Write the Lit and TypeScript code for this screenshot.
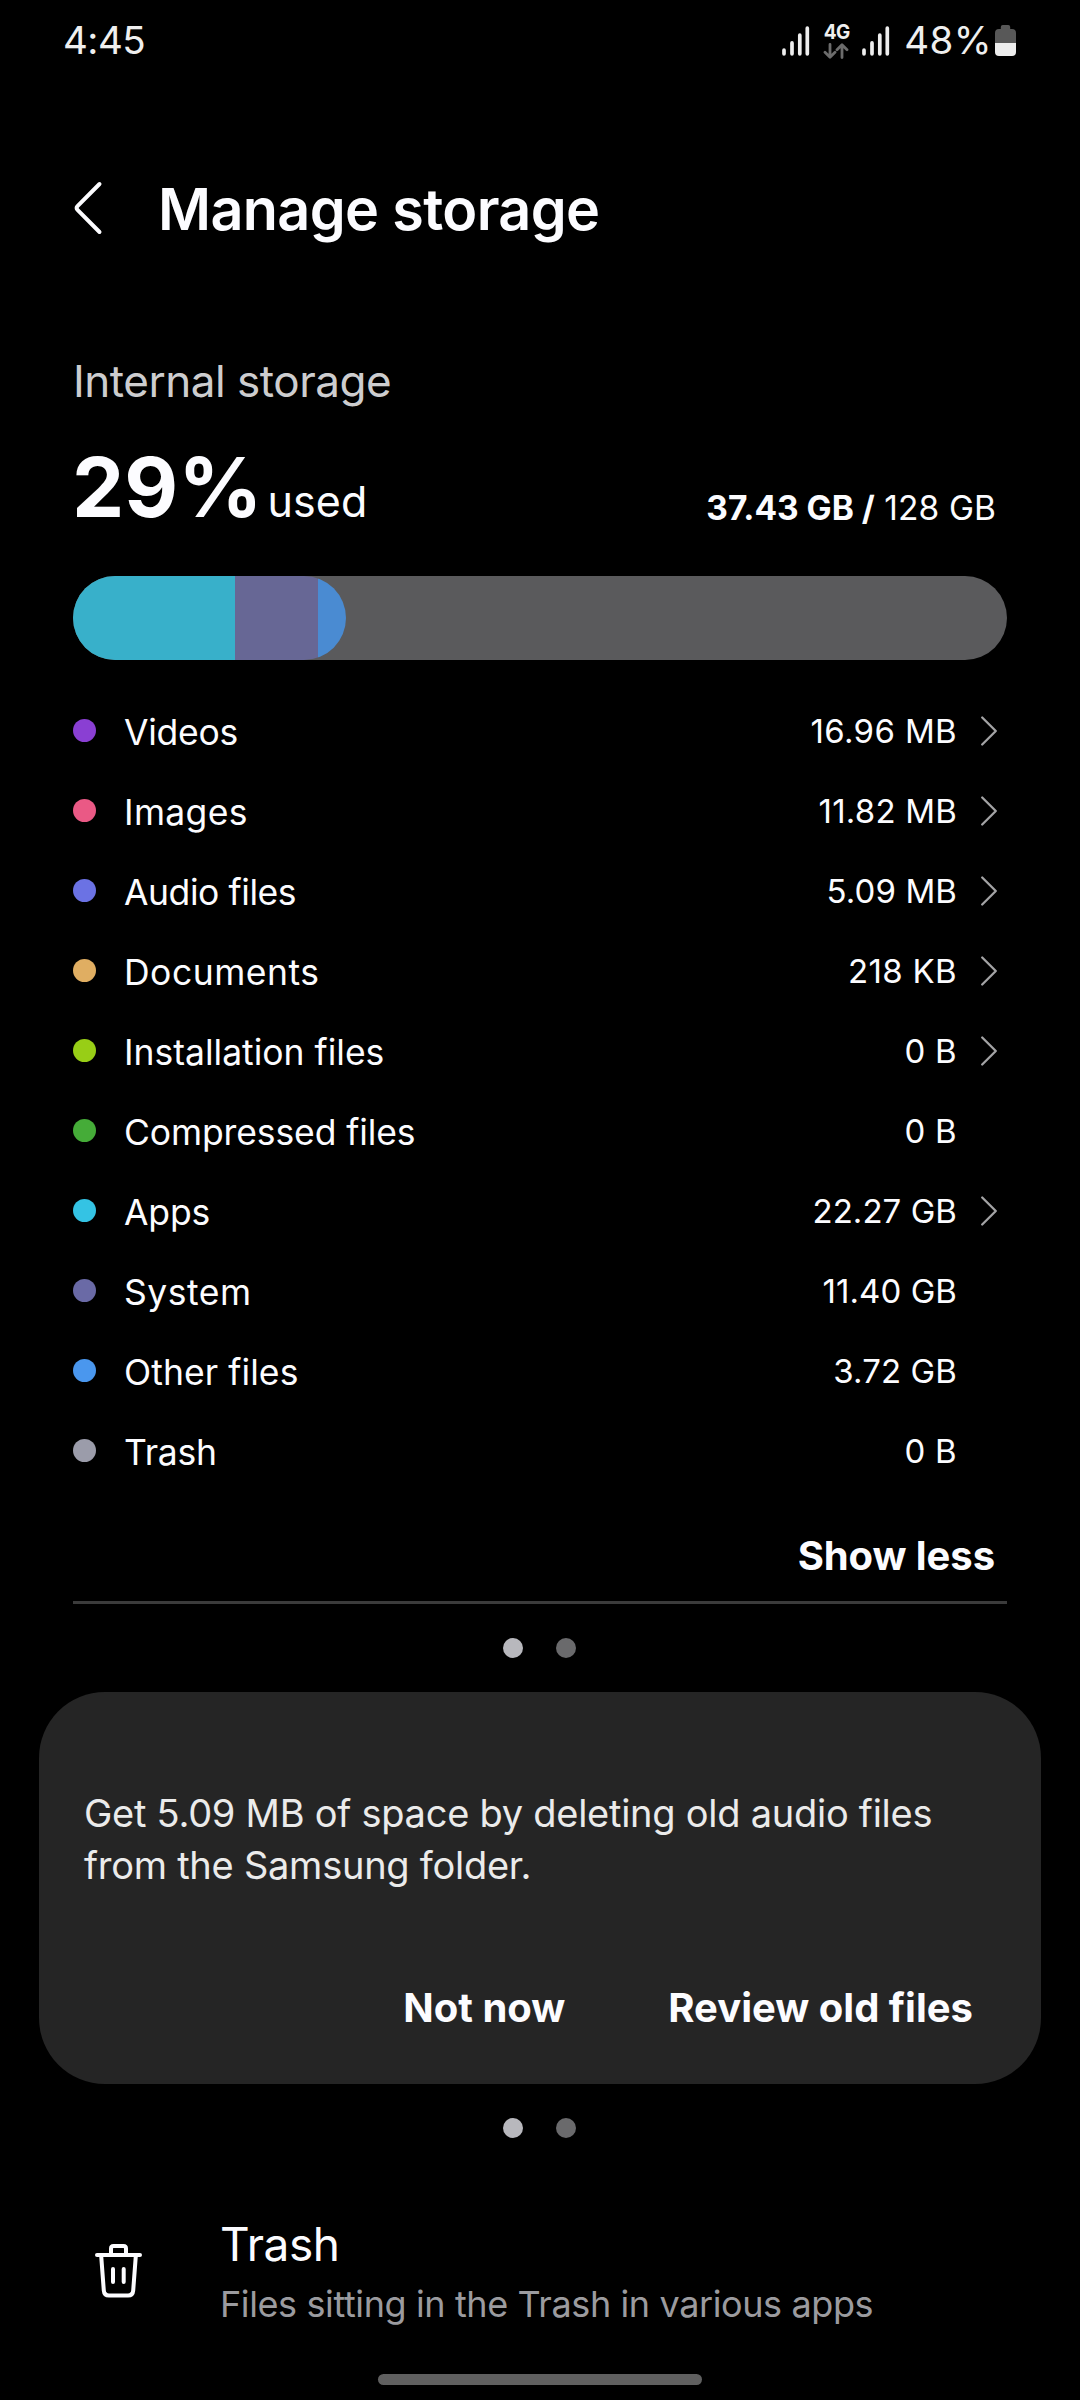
import { LitElement, html, css, svg } from "lit";
import { customElement, property } from "lit/decorators.js";
import { styleMap } from "lit/directives/style-map.js";

interface Category {
  name: string;
  size: string;
  color: string;
  opens: boolean;
  nameTracking: number;
  sizeTracking: number;
}

const CATEGORIES: Category[] = [
  { name: "Videos", size: "16.96 MB", color: "#8a3fd3", opens: true, nameTracking: -0.25, sizeTracking: 0.36 },
  { name: "Images", size: "11.82 MB", color: "#ea5985", opens: true, nameTracking: 0.35, sizeTracking: 0.2 },
  { name: "Audio files", size: "5.09 MB", color: "#6b72e4", opens: true, nameTracking: -0.43, sizeTracking: 0.1 },
  { name: "Documents", size: "218 KB", color: "#e0ae62", opens: true, nameTracking: 0.5, sizeTracking: 0.32 },
  { name: "Installation files", size: "0 B", color: "#98ce16", opens: true, nameTracking: 0, sizeTracking: 0.3 },
  { name: "Compressed files", size: "0 B", color: "#45ac38", opens: false, nameTracking: -0.11, sizeTracking: 0.3 },
  { name: "Apps", size: "22.27 GB", color: "#34c3e4", opens: true, nameTracking: -0.16, sizeTracking: 0.06 },
  { name: "System", size: "11.40 GB", color: "#6a6aa6", opens: false, nameTracking: 0.5, sizeTracking: 0.05 },
  { name: "Other files", size: "3.72 GB", color: "#4a97ee", opens: false, nameTracking: 0.08, sizeTracking: 0.1 },
  { name: "Trash", size: "0 B", color: "#9b9caa", opens: false, nameTracking: -0.25, sizeTracking: 0.3 },
];

const SEGMENTS = [
  { color: "#38b0ca", width: 162 },
  { color: "#676795", width: 83 },
  { color: "#4a8bd2", width: 28 },
];

const signalBars = svg`
  <path d="M2 24.2v3.6M10 16.9v10.9M17.8 9.2v18.6M25.3 2.2v25.6" fill="none"
    stroke="#eeeeee" stroke-width="3.7" stroke-linecap="round" />`;

@customElement("status-bar")
export class StatusBar extends LitElement {
  static styles = css`
    :host {
      display: flex;
      justify-content: space-between;
      height: 80px;
      padding: 0 64px 0 63px;
      color: #efefef;
      font-size: 38.5px;
      line-height: 80px;
    }
    .clock { letter-spacing: -0.5px; }
    .right { display: flex; }
    .signal { width: 28px; height: 30px; margin-top: 25.5px; }
    .network {
      display: flex;
      flex-direction: column;
      align-items: center;
      width: 28px;
      margin: 22px 12px 0;
    }
    .generation {
      font-size: 20px;
      line-height: 21px;
      font-weight: 700;
      letter-spacing: -0.6px;
      transform: scaleX(0.95);
    }
    .arrows { width: 26px; height: 16px; }
    .percent { margin-left: 14px; letter-spacing: 0.4px; }
    .battery { width: 21px; height: 31px; margin: 25px 0 0 3px; }
  `;

  render() {
    return html`
      <span class="clock">4:45</span>
      <div class="right">
        <svg class="signal" viewBox="0 0 28 30">${signalBars}</svg>
        <div class="network">
          <span class="generation">4G</span>
          <svg class="arrows" viewBox="0 0 26 16" fill="none" stroke="#6c6c6c" stroke-width="2.8"
            stroke-linecap="round" stroke-linejoin="round">
            <path d="M7 1.5v12.5M2 9.3l5 5 5-5M19 14.5V2M14 6.7l5-5 5 5" />
          </svg>
        </div>
        <svg class="signal" viewBox="0 0 28 30">${signalBars}</svg>
        <span class="percent">48%</span>
        <svg class="battery" viewBox="0 0 21 31">
          <path d="M5.8 4V2q0-2 2-2h5.4q2 0 2 2v2h1.8q4 0 4 4v10H0V8q0-4 4-4z" fill="#585858" />
          <path d="M0 18h21v9q0 4-4 4H4q-4 0-4-4z" fill="#ededed" />
        </svg>
      </div>
    `;
  }
}

@customElement("page-dots")
export class PageDots extends LitElement {
  static styles = css`
    :host { display: flex; justify-content: center; gap: 33px; padding: 34px 1px 34px 0; }
    .dot { width: 20px; height: 20px; border-radius: 50%; background: #6a6a6c; }
    .active { background: #b8b8bd; }
  `;

  render() {
    return html`<span class="dot active"></span><span class="dot"></span>`;
  }
}

@customElement("category-row")
export class CategoryRow extends LitElement {
  @property({ attribute: false }) category!: Category;

  static styles = css`
    :host { display: flex; align-items: center; height: 80px; color: #fcfcff; }
    .dot { width: 23px; height: 23px; margin-right: 28px; border-radius: 50%; }
    .name { flex: 1; padding-top: 5px; font-size: 35.5px; line-height: 48px; }
    .size { padding-top: 1px; font-size: 33px; line-height: 48px; }
    .slot { display: flex; width: 50px; }
    .chevron { width: 18px; height: 32px; margin-left: 22.5px; }
  `;

  render() {
    const c = this.category;
    return html`
      <span class="dot" style=${styleMap({ background: c.color })}></span>
      <span class="name" style=${styleMap({ letterSpacing: `${c.nameTracking}px` })}>${c.name}</span>
      <span class="size" style=${styleMap({ letterSpacing: `${c.sizeTracking}px` })}>${c.size}</span>
      <span class="slot">
        ${c.opens
          ? html`<svg class="chevron" viewBox="0 0 18 32" fill="none" stroke="#a3a3a5"
              stroke-width="2.3" stroke-linecap="round" stroke-linejoin="round">
              <path d="M2.2 2.5L15.8 16L2.2 29.5" />
            </svg>`
          : null}
      </span>
    `;
  }
}

@customElement("app-root")
export class AppRoot extends LitElement {
  static styles = css`
    :host {
      display: flex;
      flex-direction: column;
      box-sizing: border-box;
      width: 1080px;
      height: 2400px;
      overflow: hidden;
      background: #000;
      color: #fcfcff;
      font-family: Inter, "Liberation Sans", sans-serif;
      white-space: nowrap;
    }
    .header { display: flex; align-items: center; height: 258px; padding-left: 73px; }
    .back { width: 32px; height: 56px; margin-right: 53px; padding-bottom: 2px; }
    .title {
      margin: 0;
      font-size: 57.5px;
      line-height: 80px;
      font-weight: 600;
      letter-spacing: -0.64px;
    }
    .storage { padding: 0 73px; }
    .caption {
      color: #cdcdcf;
      font-size: 44px;
      line-height: 86px;
      letter-spacing: -0.48px;
    }
    .usage {
      display: flex;
      align-items: flex-end;
      justify-content: space-between;
      height: 127px;
      padding: 0 11px 25px 0;
    }
    .percent {
      margin-left: -1px;
      font-size: 83px;
      line-height: 127px;
      font-weight: 700;
    }
    .used {
      margin-left: 5px;
      font-size: 43px;
      line-height: 1;
      font-weight: 400;
      letter-spacing: 0.1px;
    }
    .total { font-size: 33.5px; line-height: 85.5px; }
    .total b { font-weight: 700; }
    .total span { letter-spacing: 0.1px; }
    .bar { height: 84px; border-radius: 42px; background: #5a5a5c; overflow: hidden; }
    .filled {
      display: flex;
      width: 273px;
      height: 84px;
      border-radius: 0 42px 42px 0;
      overflow: hidden;
    }
    .list { padding-top: 30.5px; }
    .less {
      height: 92px;
      padding: 18.5px 12px 0 0;
      text-align: right;
      font-size: 40px;
      line-height: 93px;
      font-weight: 700;
      letter-spacing: -0.08px;
    }
    .divider { height: 3px; background: #3b3b3b; }
    .card {
      box-sizing: border-box;
      height: 392px;
      margin: 0 39px;
      padding: 95px 68px 0 45px;
      border-radius: 66px;
      background: #252525;
    }
    .message {
      margin: 0;
      color: #ebebeb;
      font-size: 38px;
      line-height: 52px;
      letter-spacing: -0.26px;
    }
    .actions {
      display: flex;
      justify-content: flex-end;
      gap: 103px;
      padding-top: 39px;
      font-size: 40px;
      line-height: 155px;
      font-weight: 700;
    }
    .trash { display: flex; align-items: center; height: 118px; padding: 43.5px 0 0 94px; }
    .bin { width: 48px; height: 56px; margin: 0 78px 9px 0; }
    .trash-title { font-size: 46px; line-height: 59px; letter-spacing: -0.45px; }
    .trash-note {
      color: #9b9b9f;
      font-size: 36px;
      line-height: 60px;
      letter-spacing: -0.39px;
    }
    .home { width: 324px; height: 11px; margin: auto auto 15px; border-radius: 6px; background: #606060; }
  `;

  render() {
    return html`
      <status-bar></status-bar>
      <header class="header">
        <svg class="back" viewBox="0 0 32 56" fill="none" stroke="#fcfcff" stroke-width="4"
          stroke-linecap="round" stroke-linejoin="round">
          <path d="M26.5 4L4.5 26.2Q2.7 28 4.5 29.8L26.5 52" />
        </svg>
        <h1 class="title">Manage storage</h1>
      </header>
      <section class="storage">
        <div class="caption">Internal storage</div>
        <div class="usage">
          <div class="percent">29%<span class="used">used</span></div>
          <div class="total"><b>37.43 GB /</b> <span>128 GB</span></div>
        </div>
        <div class="bar">
          <div class="filled">
            ${SEGMENTS.map((s) => html`<span style=${styleMap({ width: `${s.width}px`, background: s.color })}></span>`)}
          </div>
        </div>
        <div class="list">
          ${CATEGORIES.map((c) => html`<category-row .category=${c}></category-row>`)}
        </div>
        <div class="less">Show less</div>
        <div class="divider"></div>
      </section>
      <page-dots></page-dots>
      <section class="card">
        <p class="message">Get 5.09 MB of space by deleting old audio files<br />from the Samsung folder.</p>
        <div class="actions"><span>Not now</span><span>Review old files</span></div>
      </section>
      <page-dots></page-dots>
      <section class="trash">
        <svg class="bin" viewBox="0 0 48 56" fill="none" stroke="#fcfcff" stroke-width="4"
          stroke-linecap="round" stroke-linejoin="round">
          <path d="M3 13H46" />
          <path d="M17 12V6.5Q17 4 19.5 4H29.5Q32 4 32 6.5V12" />
          <path d="M7.2 14L9.8 48.5Q10.2 53.5 15 53.5H34Q38.8 53.5 39.2 48.5L41.800 14" />
          <path d="M19 27V40M29.7 27V40" />
        </svg>
        <div>
          <div class="trash-title">Trash</div>
          <div class="trash-note">Files sitting in the Trash in various apps</div>
        </div>
      </section>
      <div class="home"></div>
    `;
  }
}
